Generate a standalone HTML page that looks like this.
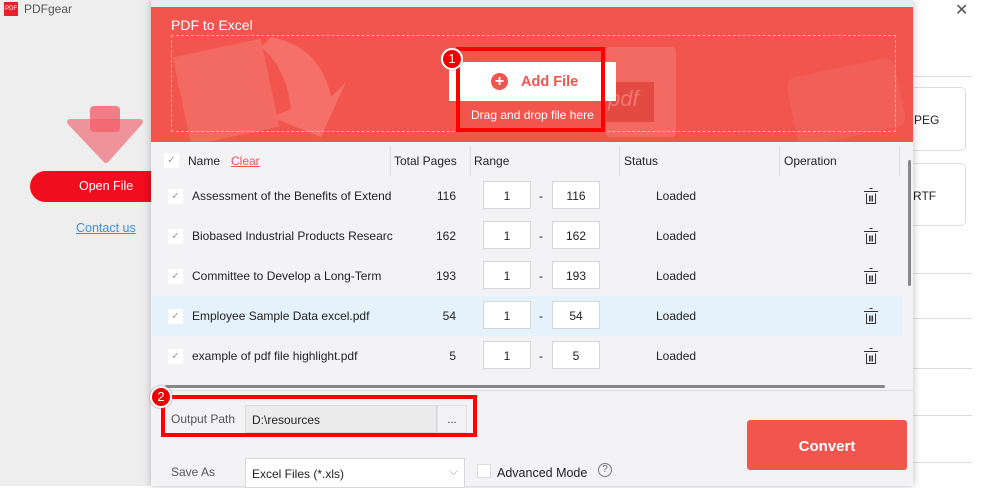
<!DOCTYPE html>
<html><head><meta charset="utf-8"><style>
*{box-sizing:border-box;margin:0;padding:0}
body{width:983px;height:486px;overflow:hidden;position:relative;background:#fff;font-family:"Liberation Sans",sans-serif;font-size:12px;color:#222}
.a{position:absolute}
.row{position:absolute;left:152px;width:750px;height:40px}
.cb{position:absolute;left:16px;top:13px;width:15px;height:15px;background:#fff;color:#999;font-size:10px;text-align:center;line-height:15px}
.nm{position:absolute;left:40px;top:13px;font-size:12px}
.tp{position:absolute;left:240px;width:64px;text-align:right;top:13px;font-size:12px}
.rb{position:absolute;top:5px;width:48px;height:28px;background:#fff;border:1px solid #d6d6d6;text-align:center;line-height:26px;font-size:12px;padding-top:1px}
.dash{position:absolute;left:387px;top:13px}
.st{position:absolute;left:504px;top:13px;font-size:12px}
.tr{position:absolute;left:711px;top:11px}
.ln{position:absolute;left:912px;width:60px;height:1px;background:#ddd}
</style></head><body>
<div class="a" style="left:0;top:0;width:152px;height:486px;background:#eeeeee"></div>
<div class="a" style="left:4px;top:2px;width:14px;height:14px;background:#e8202a;color:#fff;font-size:6px;line-height:14px;text-align:center">PDF</div>
<div class="a" style="left:24px;top:2px;font-size:12px;color:#555">PDFgear</div>
<svg class="a" style="left:66px;top:118px" width="78" height="46"><path d="M4 4 H74 L40 42 Z" fill="#f08a93" stroke="#f08a93" stroke-width="6" stroke-linejoin="round" opacity=".9"/></svg>
<div class="a" style="left:90px;top:106px;width:30px;height:26px;background:#f4606b;border-radius:4px;opacity:.8"></div>
<div class="a" style="left:30px;top:171px;width:122px;height:31px;background:#f00d1e;border-radius:16px 0 0 16px;color:#fff;font-size:12.5px;line-height:31px;padding-left:49px">Open File</div>
<div class="a" style="left:76px;top:221px;color:#3b8fe0;text-decoration:underline;font-size:12.5px">Contact us</div>
<div class="a" style="left:912px;top:0;width:71px;height:486px;background:#fff"></div>
<div class="a" style="left:955px;top:0;font-size:16px;color:#555">✕</div>
<div class="a" style="left:912px;top:76px;width:60px;height:1px;background:#ddd"></div>
<div class="a" style="left:900px;top:87px;width:66px;height:64px;border:1px solid #ddd;border-radius:5px;background:#fff"></div>
<div class="a" style="left:914px;top:113px;font-size:12px">PEG</div>
<div class="a" style="left:900px;top:163px;width:66px;height:63px;border:1px solid #ddd;border-radius:5px;background:#fff"></div>
<div class="a" style="left:913px;top:189px;font-size:12px">RTF</div>
<div class="ln" style="top:273px"></div><div class="ln" style="top:318px"></div><div class="ln" style="top:368px"></div><div class="ln" style="top:415px"></div><div class="ln" style="top:462px"></div>
<div class="a" style="left:151px;top:0;width:762px;height:486px;background:#f3f3f6;box-shadow:0 0 8px rgba(0,0,0,.25)"></div>
<div class="a" style="left:151px;top:0;width:762px;height:7px;background:#e6ecf2"></div>
<div class="a" style="left:151px;top:7px;width:762px;height:135px;background:#f2554d;overflow:hidden">
 <div class="a" style="left:30px;top:40px;width:90px;height:90px;background:#f26a62;transform:rotate(-12deg)"></div>
 <svg class="a" style="left:110px;top:30px" width="90" height="100"><path d="M10 0 Q60 10 70 60 L85 45 L60 100 L10 80 L30 72 Q25 30 0 10Z" fill="#f47068"/></svg>
 <div class="a" style="left:455px;top:40px;width:70px;height:90px;background:#f36a62;border-radius:4px"></div>
 <div class="a" style="left:453px;top:75px;width:50px;height:40px;background:#e34a42;color:#f3776f;font-size:22px;font-style:italic;padding:4px">pdf</div>
 <div class="a" style="left:640px;top:60px;width:110px;height:70px;background:#f06058;border-radius:10px;transform:rotate(-12deg)"></div>
</div>
<div class="a" style="left:171px;top:17px;color:#fff;font-size:14px">PDF to Excel</div>
<div class="a" style="left:171px;top:35px;width:725px;height:97px;border:1px dashed rgba(255,255,255,.45)"></div>
<div class="a" style="left:449px;top:62px;width:167px;height:39px;background:#fff"></div>
<div class="a" style="left:491px;top:73px;width:17px;height:17px;border-radius:50%;background:#f2554d;color:#fff;font-size:16px;line-height:17px;text-align:center;font-weight:bold">+</div>
<div class="a" style="left:521px;top:74px;color:#f2554d;font-size:14.5px;font-weight:bold">Add File</div>
<div class="a" style="left:471px;top:108px;color:#fff;font-size:12px">Drag and drop file here</div>
<div class="a" style="left:456px;top:47px;width:149px;height:85px;border:4px solid #f00"></div>
<div class="a" style="left:441px;top:48px;width:22px;height:22px;border-radius:50%;background:#e00;border:2px solid #fff;color:#fff;font-size:13px;text-align:center;line-height:18px;box-shadow:0 0 2px #888">1</div>
<div class="a" style="left:152px;top:146px;width:747px;height:30px;background:#f3f3f6"></div>
<div class="a" style="left:390px;top:146px;width:1px;height:30px;background:#ddd"></div>
<div class="a" style="left:470px;top:146px;width:1px;height:30px;background:#ddd"></div>
<div class="a" style="left:619px;top:146px;width:1px;height:30px;background:#ddd"></div>
<div class="a" style="left:779px;top:146px;width:1px;height:30px;background:#ddd"></div>
<div class="a" style="left:899px;top:146px;width:1px;height:30px;background:#ddd"></div>
<div class="a" style="left:164px;top:153px;width:15px;height:15px;background:#fff;color:#999;font-size:10px;text-align:center;line-height:15px">✓</div>
<div class="a" style="left:188px;top:154px;font-size:12px">Name</div>
<div class="a" style="left:231px;top:154px;font-size:12px;color:#f2554d;text-decoration:underline">Clear</div>
<div class="a" style="left:394px;top:154px;font-size:12px">Total Pages</div>
<div class="a" style="left:474px;top:154px;font-size:12px">Range</div>
<div class="a" style="left:624px;top:154px;font-size:12px">Status</div>
<div class="a" style="left:784px;top:154px;font-size:12px">Operation</div>
<div class="row" style="top:176px"><div class="cb">✓</div><div class="nm">Assessment of the Benefits of Extend</div><div class="tp">116</div><div class="rb" style="left:331px">1</div><div class="dash">-</div><div class="rb" style="left:400px">116</div><div class="st">Loaded</div><svg class="tr" width="16" height="18"><path d="M6.5 1.5h3M1 4.5h14M3.5 6.5v10h9v-10M6.5 8.5v6M8 8.5v6M9.5 8.5v6" stroke="#333" fill="none" stroke-width="1"/></svg></div>
<div class="row" style="top:216px"><div class="cb">✓</div><div class="nm">Biobased Industrial Products Researc</div><div class="tp">162</div><div class="rb" style="left:331px">1</div><div class="dash">-</div><div class="rb" style="left:400px">162</div><div class="st">Loaded</div><svg class="tr" width="16" height="18"><path d="M6.5 1.5h3M1 4.5h14M3.5 6.5v10h9v-10M6.5 8.5v6M8 8.5v6M9.5 8.5v6" stroke="#333" fill="none" stroke-width="1"/></svg></div>
<div class="row" style="top:256px"><div class="cb">✓</div><div class="nm">Committee to Develop a Long-Term</div><div class="tp">193</div><div class="rb" style="left:331px">1</div><div class="dash">-</div><div class="rb" style="left:400px">193</div><div class="st">Loaded</div><svg class="tr" width="16" height="18"><path d="M6.5 1.5h3M1 4.5h14M3.5 6.5v10h9v-10M6.5 8.5v6M8 8.5v6M9.5 8.5v6" stroke="#333" fill="none" stroke-width="1"/></svg></div>
<div class="row" style="top:296px;background:#e5f1fb"><div class="cb">✓</div><div class="nm">Employee Sample Data excel.pdf</div><div class="tp">54</div><div class="rb" style="left:331px">1</div><div class="dash">-</div><div class="rb" style="left:400px">54</div><div class="st">Loaded</div><svg class="tr" width="16" height="18"><path d="M6.5 1.5h3M1 4.5h14M3.5 6.5v10h9v-10M6.5 8.5v6M8 8.5v6M9.5 8.5v6" stroke="#333" fill="none" stroke-width="1"/></svg></div>
<div class="row" style="top:336px"><div class="cb">✓</div><div class="nm">example of pdf file highlight.pdf</div><div class="tp">5</div><div class="rb" style="left:331px">1</div><div class="dash">-</div><div class="rb" style="left:400px">5</div><div class="st">Loaded</div><svg class="tr" width="16" height="18"><path d="M6.5 1.5h3M1 4.5h14M3.5 6.5v10h9v-10M6.5 8.5v6M8 8.5v6M9.5 8.5v6" stroke="#333" fill="none" stroke-width="1"/></svg></div>
<div class="a" style="left:908px;top:160px;width:3px;height:126px;background:#888;border-radius:2px"></div>
<div class="a" style="left:165px;top:385px;width:720px;height:3px;background:#888;border-radius:2px"></div>
<div class="a" style="left:151px;top:390px;width:762px;height:1px;background:#ddd"></div>
<div class="a" style="left:171px;top:412px;font-size:12px;color:#555">Output Path</div>
<div class="a" style="left:245px;top:405px;width:192px;height:28px;background:#ececec;border:1px solid #d8d8d8;padding:7px 6px;font-size:12px">D:\resources</div>
<div class="a" style="left:437px;top:405px;width:30px;height:28px;background:#f3f3f6;border:1px solid #e0e0e0;text-align:center;font-size:11px;line-height:28px">...</div>
<div class="a" style="left:161px;top:395px;width:316px;height:42px;border:4px solid #f00"></div>
<div class="a" style="left:150px;top:386px;width:22px;height:22px;border-radius:50%;background:#e00;border:2px solid #fff;color:#fff;font-size:13px;text-align:center;line-height:18px;box-shadow:0 0 2px #888">2</div>
<div class="a" style="left:171px;top:465px;font-size:12px;color:#555">Save As</div>
<div class="a" style="left:245px;top:458px;width:220px;height:30px;background:#fff;border:1px solid #d8d8d8;padding:8px 6px;font-size:12px">Excel Files (*.xls)<span style="position:absolute;right:6px;top:5px;color:#aaa">⌵</span></div>
<div class="a" style="left:477px;top:464px;width:14px;height:14px;background:#fff;border:1px solid #ddd"></div>
<div class="a" style="left:497px;top:466px;font-size:12.5px">Advanced Mode</div>
<div class="a" style="left:598px;top:463px;width:14px;height:14px;border:1px solid #777;border-radius:50%;font-size:10px;text-align:center;line-height:12px;color:#666">?</div>
<div class="a" style="left:747px;top:420px;width:160px;height:50px;background:#f2554d;border-radius:3px;color:#fff;font-size:15px;font-weight:bold;text-align:center;line-height:54px">Convert</div>
</body></html>
